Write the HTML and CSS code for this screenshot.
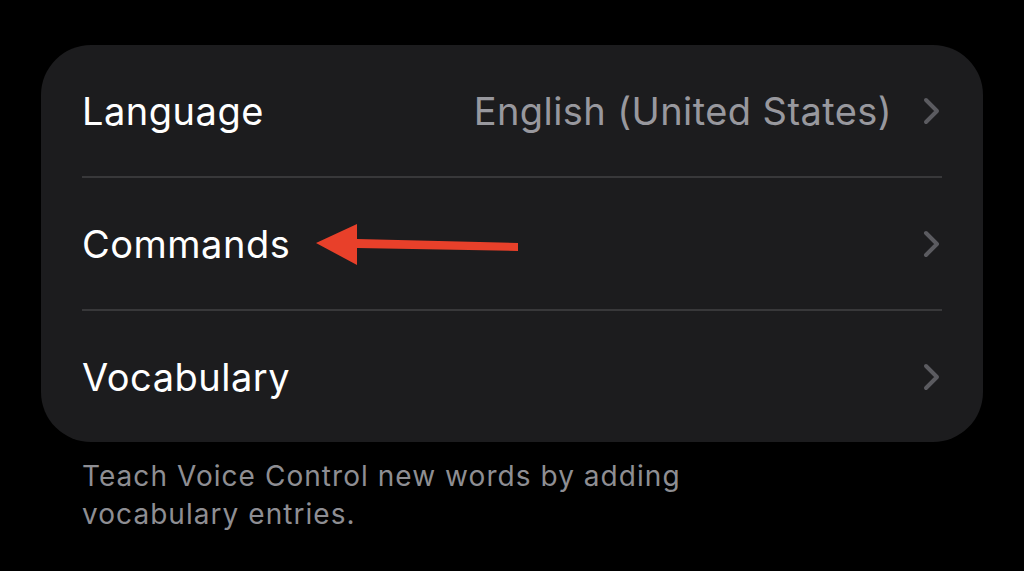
FILE: index.html
```html
<!DOCTYPE html>
<html lang="en">
<head>
<meta charset="utf-8">
<title>Voice Control</title>
<link rel="stylesheet" href="styles.css">
</head>
<body>
<main class="page">
  <section class="group">
    <div class="row">
      <span class="label">Language</span>
      <span class="value">English (United States)</span>
      <svg class="chev" viewBox="0 0 18 28" width="18" height="28"><path d="M3 3 L14 14 L3 25" fill="none" stroke="#5b5b60" stroke-width="4" stroke-linecap="round" stroke-linejoin="round"/></svg>
    </div>
    <div class="row">
      <span class="label">Commands</span>
      <svg class="chev" viewBox="0 0 18 28" width="18" height="28"><path d="M3 3 L14 14 L3 25" fill="none" stroke="#5b5b60" stroke-width="4" stroke-linecap="round" stroke-linejoin="round"/></svg>
      <svg class="arrow" viewBox="0 0 210 50" width="210" height="50"><polygon points="0,25 41,6 41,21 202,25 202,33 41,30 41,47" fill="#e8402a"/></svg>
    </div>
    <div class="row">
      <span class="label">Vocabulary</span>
      <svg class="chev" viewBox="0 0 18 28" width="18" height="28"><path d="M3 3 L14 14 L3 25" fill="none" stroke="#5b5b60" stroke-width="4" stroke-linecap="round" stroke-linejoin="round"/></svg>
    </div>
  </section>
  <p class="footer">Teach Voice Control new words by adding<br>vocabulary entries.</p>
</main>
</body>
</html>
```
FILE: styles.css
```css
html, body {
  margin: 0;
  padding: 0;
  background: #000;
  height: 100%;
}
.page {
  padding: 45px 41px 0 41px;
  font-family: Inter, "Open Sans", "Liberation Sans", sans-serif;
}
.group {
  background: #1c1c1e;
  border-radius: 50px;
  width: 942px;
  overflow: hidden;
}
.row {
  position: relative;
  display: flex;
  align-items: center;
  height: 131px;
  margin: 0 41px;
  box-sizing: content-box;
}
.row + .row {
  border-top: 2px solid #38383a;
}
.label {
  color: #ffffff;
  font-size: 38px;
  letter-spacing: 0.5px;
  flex: 1;
}
.value {
  color: #98989e;
  font-size: 38px;
  letter-spacing: 0.42px;
  margin-right: 31px;
}
.chev {
  display: block;
  margin-right: 1px;
}
.arrow {
  position: absolute;
  left: 234px;
  top: 40px;
}
.footer {
  margin: 15px 0 0 41px;
  color: #8e8e93;
  font-size: 28px;
  letter-spacing: 1.05px;
  line-height: 38px;
}
```
